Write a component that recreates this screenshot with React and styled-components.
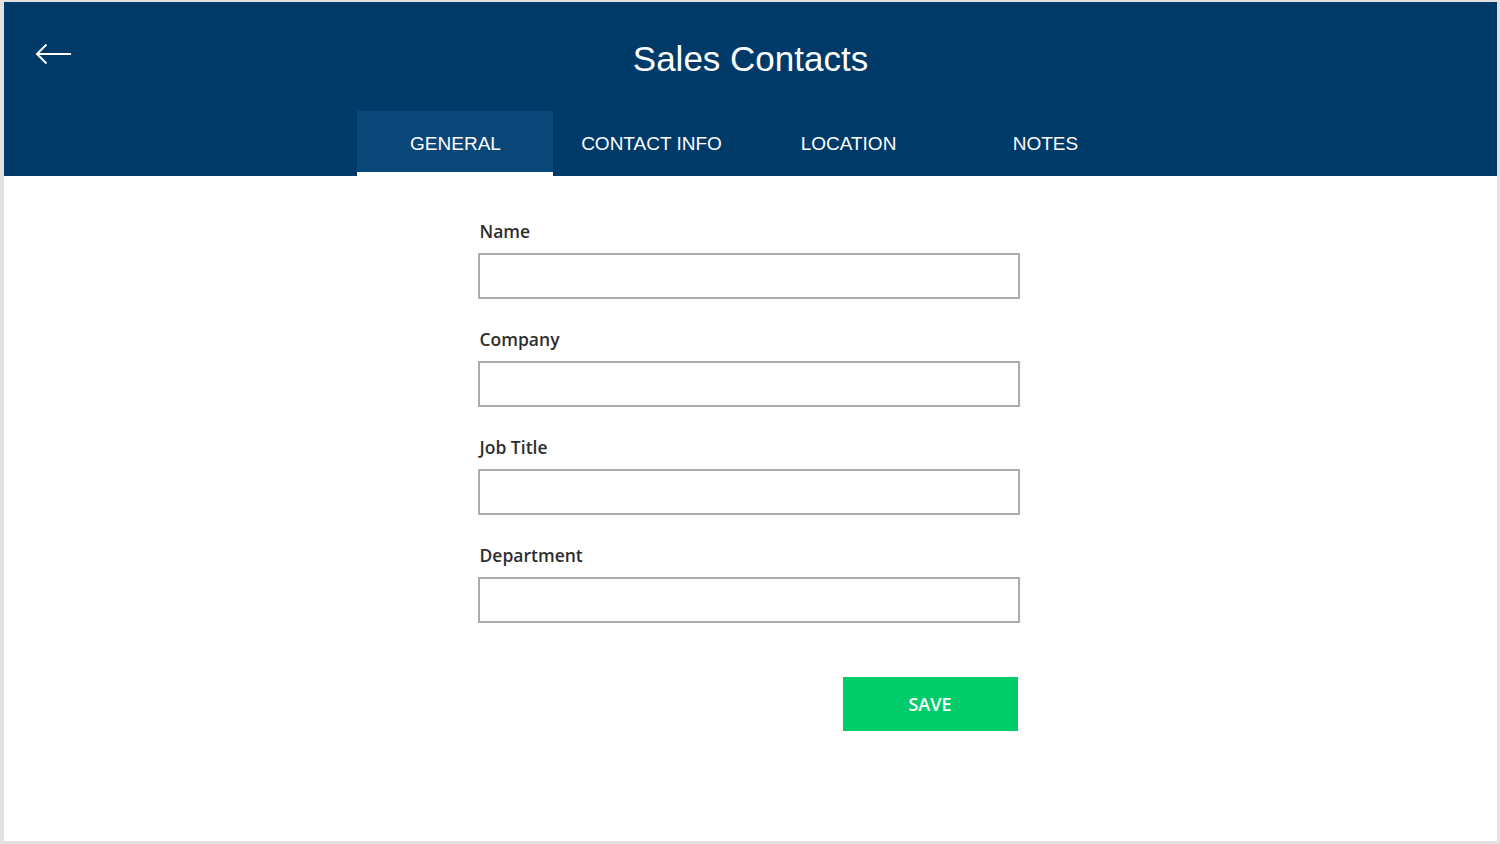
import React, { useState } from 'react';
import styled, { createGlobalStyle } from 'styled-components';

const GlobalStyle = createGlobalStyle`
    html, body {
        margin: 0;
        padding: 0;
        background: #e1e1e1;
    }
    * {
        box-sizing: border-box;
    }
`

const Frame = styled.main`
    margin: 2px 3px 3px 4px;
    height: 839px;
    background: #ffffff;
    display: flex;
    flex-direction: column;
`

const Header = styled.header`
    background: #003a69;
    display: flex;
    flex-direction: column;
`

const TopBar = styled.div`
    height: 109px;
    display: grid;
    grid-template-columns: 1fr auto 1fr;
    align-items: start;
`

const BackButton = styled.button`
    justify-self: start;
    margin: 38px 0 0 31px;
    padding: 0;
    width: 40px;
    height: 28px;
    border: none;
    background: transparent;
    cursor: pointer;
    display: flex;
    align-items: center;
`

const Title = styled.h1`
    margin: 36px 0 0;
    font-family: 'Liberation Sans', Arial, sans-serif;
    font-weight: 400;
    font-size: 35px;
    line-height: 42px;
    color: #ffffff;
`

const TabBar = styled.nav`
    display: flex;
    justify-content: center;
    padding-right: 4px;
`

const Tab = styled.button`
    width: 196px;
    height: 65px;
    border: none;
    padding: 4px 0 0 ${props => props.shift || 0}px;
    margin: 0;
    background: ${props => props.active ? '#0b4679' : 'transparent'};
    border-bottom: 4px solid ${props => props.active ? '#ffffff' : 'transparent'};
    color: #ffffff;
    font-family: 'Liberation Sans', Arial, sans-serif;
    font-size: 19px;
    cursor: pointer;
`

const Form = styled.form`
    width: 542px;
    margin: 40px auto 0;
    transform: translateX(-2px);
    display: flex;
    flex-direction: column;
`

const Field = styled.div`
    display: flex;
    flex-direction: column;
    margin-bottom: 25px;
`

const Label = styled.label`
    font-family: 'Open Sans', 'Noto Sans', sans-serif;
    font-weight: 600;
    font-size: 17.5px;
    line-height: 30px;
    color: #2e2e2e;
    padding-left: 2px;
    margin-bottom: 7px;
`

const Input = styled.input`
    height: 46px;
    border: 2px solid #ababab;
    padding: 0 10px;
    font-family: 'Open Sans', 'Noto Sans', sans-serif;
    font-size: 17px;
    outline: none;
`

const Actions = styled.div`
    display: flex;
    justify-content: flex-end;
    padding-right: 2px;
    margin-top: 29px;
`

const SaveBtn = styled.button`
    width: 175px;
    height: 54px;
    border: none;
    background: #00cc6a;
    color: #ffffff;
    font-family: 'Open Sans', 'Noto Sans', sans-serif;
    font-weight: 600;
    font-size: 18px;
    cursor: pointer;
`

const tabs = [
    { label: 'GENERAL', shift: 2 },
    { label: 'CONTACT INFO', shift: 2 },
    { label: 'LOCATION', shift: 4 },
    { label: 'NOTES', shift: 6 },
]
const fields = ['Name', 'Company', 'Job Title', 'Department']

function App() {
    const [active, setActive] = useState('GENERAL')

    return (
        <>
            <GlobalStyle />
            <Frame>
                <Header>
                    <TopBar>
                        <BackButton aria-label='back'>
                            <svg width='40' height='28' viewBox='0 0 40 28'>
                                <path d='M2 14 H36 M11.5 4.5 L2 14 L11.5 23.5' fill='none' stroke='#ffffff' strokeWidth='2' />
                            </svg>
                        </BackButton>
                        <Title>Sales Contacts</Title>
                    </TopBar>
                    <TabBar>
                        {tabs.map(t => (
                            <Tab key={t.label} shift={t.shift} active={active === t.label} onClick={() => setActive(t.label)}>{t.label}</Tab>
                        ))}
                    </TabBar>
                </Header>
                <Form onSubmit={e => e.preventDefault()}>
                    {fields.map(f => (
                        <Field key={f}>
                            <Label>{f}</Label>
                            <Input type='text' />
                        </Field>
                    ))}
                    <Actions>
                        <SaveBtn type='submit'>SAVE</SaveBtn>
                    </Actions>
                </Form>
            </Frame>
        </>
    )
}

export default App;
